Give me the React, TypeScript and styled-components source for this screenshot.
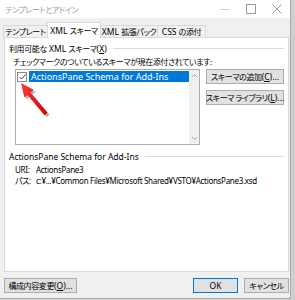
import React from 'react';
import styled, { createGlobalStyle } from 'styled-components';

const Global = createGlobalStyle`
  html, body {
    margin: 0;
    padding: 0;
    background: #cfcfcf;
  }
  body {
    font-family: "Noto Sans", "Noto Sans CJK JP", sans-serif;
    font-size: 8.5px;
    font-feature-settings: "palt";
    color: #000;
    white-space: nowrap;
  }
`;

// Japanese runs: CJK glyphs are wider than Yu Gothic UI, so tighten them
const Ja = styled.span`
  font-family: "Noto Sans CJK JP", sans-serif;
  font-size: 8px;
  letter-spacing: -0.4px;
`;

const Window = styled.div`
  position: relative;
  width: 290px;
  height: 298px;
  background: #f0f0f0;
  border-right: 1px solid #a9a9a9;
  border-bottom: 1px solid #a9a9a9;
  display: flex;
  flex-direction: column;
  overflow: hidden;
`;

const TitleBar = styled.div`
  height: 18px;
  background: #fff;
  display: flex;
  align-items: center;
  padding-left: 5px;
  color: #9a9a9a;
`;

const Title = styled.div`
  flex: 1;
`;

const Caption = styled.div`
  width: 26px;
  height: 18px;
  display: flex;
  align-items: center;
  justify-content: center;
`;

const Body = styled.div`
  flex: 1;
  display: flex;
  flex-direction: column;
  padding: 5px 1px 5px 4px;
`;

const TabStrip = styled.div`
  display: flex;
  align-items: flex-end;
  height: 15px;
  position: relative;
  z-index: 1;
  margin-bottom: -1px;
  margin-left: -1px;
`;

const Tab = styled.div<{ $active?: boolean; $w: number }>`
  width: ${p => p.$w}px;
  height: ${p => (p.$active ? 16 : 13)}px;
  box-sizing: border-box;
  display: flex;
  align-items: center;
  justify-content: center;
  background: ${p => (p.$active ? '#fff' : '#f0f0f0')};
  border: 1px solid #d9d9d9;
  border-bottom: ${p => (p.$active ? 'none' : '1px solid #d9d9d9')};
  margin-left: -1px;
  &:first-child { margin-left: 0; }
`;

const Panel = styled.div`
  flex: 1;
  background: #fff;
  border: 1px solid #d9d9d9;
  padding: 4px 4px 0 4px;
  display: flex;
  flex-direction: column;
`;

const GroupHeader = styled.div<{ $gap?: number }>`
  display: flex;
  align-items: center;
  gap: 6px;
  height: 12px;
  margin-top: ${p => p.$gap ?? 0}px;
`;

const Rule = styled.div`
  flex: 1;
  height: 1px;
  background: #dcdcdc;
`;

const Under = styled.span`
  text-decoration: underline;
`;

const GroupBody = styled.div`
  padding-left: 4px;
`;

const Hint = styled.div`
  line-height: 12px;
  margin-top: 2px;
`;

const SchemaRow = styled.div`
  display: flex;
  margin-top: 1px;
  margin-left: 2px;
  gap: 6px;
`;

const ListBox = styled.div`
  width: 185px;
  height: 76px;
  box-sizing: border-box;
  border: 1px solid #adadad;
  display: flex;
  background: #fff;
`;

const Items = styled.div`
  flex: 1;
  padding: 1px 0 0 1px;
`;

const Item = styled.div`
  display: flex;
  align-items: center;
  height: 11px;
  gap: 2px;
`;

const Check = styled.div`
  width: 8px;
  height: 8px;
  border: 1px solid #8a8a8a;
  background: #fff;
  display: flex;
  align-items: center;
  justify-content: center;
`;

const ItemText = styled.div<{ $selected?: boolean }>`
  flex: 1;
  height: 11px;
  line-height: 11px;
  padding-left: 2px;
  font-size: 9px;
  background: ${p => (p.$selected ? '#0078d7' : 'transparent')};
  color: ${p => (p.$selected ? '#fff' : '#000')};
`;

const ScrollBar = styled.div`
  width: 10px;
  background: #f0f0f0;
  display: flex;
  flex-direction: column;
  justify-content: space-between;
  align-items: center;
  padding: 3px 0;
`;

const Buttons = styled.div`
  display: flex;
  flex-direction: column;
  gap: 6px;
`;

const Button = styled.div<{ $w: number; $default?: boolean }>`
  width: ${p => p.$w}px;
  height: 15px;
  box-sizing: border-box;
  background: #e1e1e1;
  border: 1px solid ${p => (p.$default ? '#0078d7' : '#adadad')};
  display: flex;
  align-items: center;
  justify-content: center;
  line-height: 12px;
`;

const Info = styled.div`
  display: grid;
  grid-template-columns: 21px 1fr;
  line-height: 11px;
  font-size: 8px;
  letter-spacing: -0.3px;
  padding-left: 2px;
  margin-top: 2px;
`;

const Footer = styled.div`
  display: flex;
  justify-content: space-between;
  margin-top: 6px;
`;

const FooterRight = styled.div`
  display: flex;
  gap: 6px;
`;

const Arrow = styled.svg`
  position: absolute;
  left: 0;
  top: 0;
  pointer-events: none;
`;

const Chevron = ({ up }: { up?: boolean }) => (
  <svg width="7" height="5" viewBox="0 0 7 5">
    <path d={up ? 'M1 4 L3.5 1.5 L6 4' : 'M1 1 L3.5 3.5 L6 1'} fill="none" stroke="#a6a6a6" strokeWidth="1" />
  </svg>
);

export default function App() {
  return (
    <>
      <Global />
      <Window>
        <TitleBar>
          <Title><Ja>テンプレートとアドイン</Ja></Title>
          <Caption>
            <svg width="10" height="10"><path d="M0 5.5 H10" stroke="#d0d0d0" /></svg>
          </Caption>
          <Caption>
            <svg width="10" height="10"><rect x="0.5" y="0.5" width="9" height="9" fill="none" stroke="#999" /></svg>
          </Caption>
          <Caption>
            <svg width="10" height="10"><path d="M0.5 0.5 L9.5 9.5 M9.5 0.5 L0.5 9.5" stroke="#999" /></svg>
          </Caption>
        </TitleBar>
        <Body>
          <TabStrip>
            <Tab $w={45}><Ja>テンプレート</Ja></Tab>
            <Tab $w={54} $active>XML&nbsp;<Ja>スキーマ</Ja></Tab>
            <Tab $w={58}>XML&nbsp;<Ja>拡張パック</Ja></Tab>
            <Tab $w={49}>CSS&nbsp;<Ja>の添付</Ja></Tab>
          </TabStrip>
          <Panel>
            <GroupHeader>
              <span><Ja>利用可能な</Ja> XML <Ja>スキーマ</Ja>(<Under>X</Under>)</span>
              <Rule />
            </GroupHeader>
            <GroupBody>
              <Hint><Ja>チェックマークのついているスキーマが現在添付されています:</Ja></Hint>
              <SchemaRow>
                <ListBox>
                  <Items>
                    <Item>
                      <Check>
                        <svg width="7" height="6" viewBox="0 0 7 6">
                          <path d="M0.5 3 L2.5 5 L6.5 0.5" fill="none" stroke="#333" strokeWidth="1" />
                        </svg>
                      </Check>
                      <ItemText $selected>ActionsPane Schema for Add-Ins</ItemText>
                    </Item>
                  </Items>
                  <ScrollBar>
                    <Chevron up />
                    <Chevron />
                  </ScrollBar>
                </ListBox>
                <Buttons>
                  <Button $w={78}><Ja>スキーマの追加</Ja>(<Under>C</Under>)...</Button>
                  <Button $w={78}><Ja>スキーマ ライブラリ</Ja>(<Under>L</Under>)...</Button>
                </Buttons>
              </SchemaRow>
            </GroupBody>
            <GroupHeader $gap={5}>
              <span>ActionsPane Schema for Add-Ins</span>
              <Rule />
            </GroupHeader>
            <GroupBody>
              <Info>
                <span>URI:</span>
                <span>ActionsPane3</span>
                <span><Ja>パス</Ja>:</span>
                <span>c:¥...¥Common Files¥Microsoft Shared¥VSTO¥ActionsPane3.xsd</span>
              </Info>
            </GroupBody>
          </Panel>
          <Footer>
            <Button $w={73}><Ja>構成内容変更</Ja>(<Under>O</Under>)...</Button>
            <FooterRight>
              <Button $w={45} $default>OK</Button>
              <Button $w={45}><Ja>キャンセル</Ja></Button>
            </FooterRight>
          </Footer>
        </Body>
        <Arrow width="60" height="125" viewBox="0 0 60 125">
          <defs>
            <linearGradient id="ar" x1="0" y1="0" x2="1" y2="1">
              <stop offset="0" stopColor="#ff3b3b" />
              <stop offset="1" stopColor="#d00000" />
            </linearGradient>
          </defs>
          <path
            d="M23 85 L26.4 99.6 L29.5 97 L46.5 117.3 L49.5 114.7 L32.5 94.4 L35.6 91.8 Z"
            fill="#000"
            opacity="0.3"
          />
          <path
            d="M21 83 L24.4 97.6 L27.5 95 L44.5 115.3 L47.5 112.7 L30.5 92.4 L33.6 89.8 Z"
            fill="url(#ar)"
          />
        </Arrow>
      </Window>
    </>
  );
}
